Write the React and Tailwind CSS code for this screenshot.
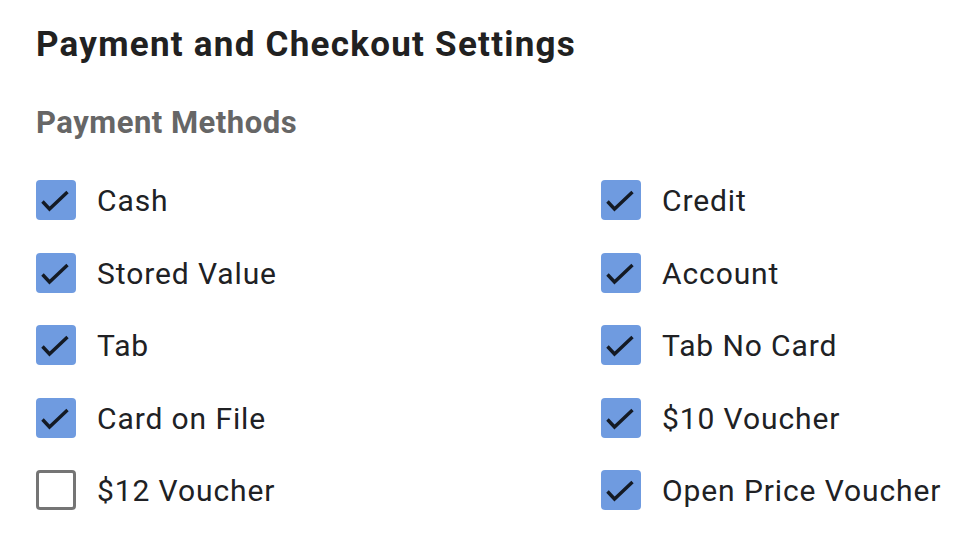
import React from "react";

const methods = [
  ["Cash", true],
  ["Credit", true],
  ["Stored Value", true],
  ["Account", true],
  ["Tab", true],
  ["Tab No Card", true],
  ["Card on File", true],
  ["$10 Voucher", true],
  ["$12 Voucher", false],
  ["Open Price Voucher", true],
];

function Checkbox({ checked }) {
  if (!checked) {
    return <div className="w-10 h-10 shrink-0 rounded-[4px] border-[3px] border-[#757575] bg-white" />;
  }
  return (
    <div className="w-10 h-10 shrink-0 rounded-[4px] bg-[#6f9be0] flex items-center justify-center">
      <svg width="40" height="40" viewBox="0 0 40 40" fill="none">
        <path d="M6.5 21.5 L13.5 29 L31.5 12" stroke="#141a24" strokeWidth="3.4" strokeLinecap="butt" strokeLinejoin="miter" />
      </svg>
    </div>
  );
}

export default function App() {
  return (
    <div className="w-[978px] h-[534px] bg-white pl-9 pt-[25px] font-['Roboto',sans-serif]">
      <h1 className="text-[35px] font-bold text-[#212121] leading-[40px] tracking-[1.25px]">Payment and Checkout Settings</h1>
      <h2 className="mt-[40px] text-[31px] font-bold text-[#666666] leading-[36px] tracking-[0.5px]">Payment Methods</h2>
      <div className="mt-[39px] grid grid-cols-[565px_1fr] gap-y-[32.5px]">
        {methods.map(([label, checked]) => (
          <div key={label} className="flex items-center gap-[21px] h-10">
            <Checkbox checked={checked} />
            <span className="text-[30px] text-[#202124] leading-none tracking-[0.9px] pt-[2px]">{label}</span>
          </div>
        ))}
      </div>
    </div>
  );
}
